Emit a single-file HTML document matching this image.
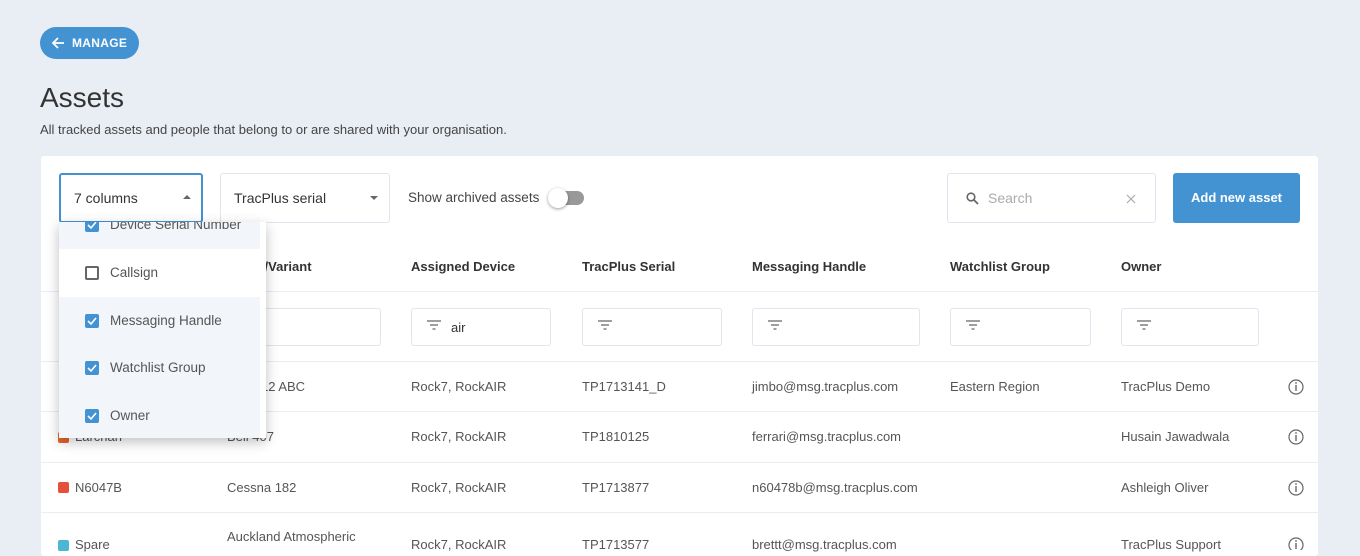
<!DOCTYPE html><html><head><style>
*{box-sizing:border-box;margin:0;padding:0}
body{width:1360px;height:550px;overflow:hidden;background:#e9eef5;font-family:"Liberation Sans",sans-serif;color:#333;position:relative}
.abs{position:absolute}
.btn{left:40px;top:27px;width:99px;height:32px;border-radius:16px;background:#4393d3;color:#fff;font-size:12px;font-weight:bold;line-height:32px;padding-left:32px;letter-spacing:.3px}
h1{position:absolute;left:40px;top:82px;font-size:28px;font-weight:normal;color:#333}
.sub{left:40px;top:122px;font-size:13px;color:#444}
.card{left:41px;top:156px;width:1277px;height:400px;background:#fff;border-radius:3px}
.sel{border:1px solid #dfe6ee;border-radius:3px;height:50px;font-size:14px;line-height:48px;padding-left:13px;background:#fff}
.th{font-size:13px;font-weight:bold;color:#333;top:259px}
.f{top:308px;height:38px;border:1px solid #dfe6ee;border-radius:3px;background:#fff}
.td{font-size:13px;color:#555}
.hl{height:1px;background:#e8eef4;left:41px;width:1277px}
.dot{width:11px;height:11px;border-radius:2px}
.menu{left:59px;top:222px;width:207px;height:216px;background:#fff;box-shadow:0 4px 12px rgba(0,0,0,.25);overflow:hidden}
.it{position:absolute;left:0;width:201px;height:48px;font-size:13.5px;color:#555;line-height:48px;padding-left:51px}
.cb{position:absolute;left:26px;top:17px;width:14px;height:14px;border-radius:2px;background:#4393d3}
.cb.off{background:#fff;border:2px solid #666}
</style></head><body>
<div class="abs btn"><svg class="abs" style="left:11px;top:9px" width="14" height="14" viewBox="0 0 14 14"><path d="M13 7H2M7 2L2 7l5 5" stroke="#fff" stroke-width="1.8" fill="none"/></svg>MANAGE</div>
<h1>Assets</h1>
<div class="abs sub">All tracked assets and people that belong to or are shared with your organisation.</div>
<div class="abs card"></div>
<div class="abs sel" style="left:59px;top:173px;width:144px;border:2px solid #4393d3;line-height:46px">7 columns<span class="abs" style="left:122px;top:20px;border:4px solid transparent;border-bottom:4px solid #666;border-top:0"></span></div>
<div class="abs sel" style="left:220px;top:173px;width:170px">TracPlus serial<span class="abs" style="left:149px;top:22px;border:4px solid transparent;border-top:4px solid #666;border-bottom:0"></span></div>
<div class="abs" style="left:408px;top:190px;font-size:13.5px;color:#444">Show archived assets</div>
<div class="abs" style="left:552px;top:191px;width:32px;height:14px;border-radius:7px;background:#999"></div>
<div class="abs" style="left:548px;top:188px;width:20px;height:20px;border-radius:50%;background:#fff;box-shadow:0 1px 3px rgba(0,0,0,.4)"></div>
<div class="abs sel" style="left:947px;top:173px;width:209px;color:#aaa;padding-left:40px">Search
<svg class="abs" style="left:18px;top:18px" width="13" height="13" viewBox="0 0 13 13"><circle cx="5" cy="5" r="3.8" stroke="#666" stroke-width="1.6" fill="none"/><path d="M8 8l4 4" stroke="#666" stroke-width="1.8"/></svg>
<svg class="abs" style="left:178px;top:20px" width="10" height="10"><path d="M1 1l8 8M9 1L1 9" stroke="#aaa" stroke-width="1.2"/></svg></div>
<div class="abs" style="left:1173px;top:173px;width:127px;height:50px;background:#4393d3;border-radius:3px;color:#fff;font-size:13px;font-weight:bold;text-align:center;line-height:50px">Add new asset</div>

<div class="abs th" style="left:227px">Model/Variant</div>
<div class="abs th" style="left:411px">Assigned Device</div>
<div class="abs th" style="left:582px">TracPlus Serial</div>
<div class="abs th" style="left:752px">Messaging Handle</div>
<div class="abs th" style="left:950px">Watchlist Group</div>
<div class="abs th" style="left:1121px">Owner</div>
<div class="abs hl" style="top:291px"></div>
<div class="abs f" style="left:227px;width:154px"></div>
<div class="abs f" style="left:411px;width:140px"><span class="abs td" style="left:39px;top:11px;color:#333">air</span></div>
<div class="abs f" style="left:582px;width:140px"></div>
<div class="abs f" style="left:752px;width:168px"></div>
<div class="abs f" style="left:950px;width:141px"></div>
<div class="abs f" style="left:1121px;width:138px"></div>
<svg class="abs" style="left:0;top:0" width="1360" height="550">
<g stroke="#666" stroke-width="1.3"><g id="fi"><path d="M427 321h14M430 325h8M432.5 329h3"/></g>
<use href="#fi" x="171"/><use href="#fi" x="341"/><use href="#fi" x="539"/><use href="#fi" x="710"/></g>
<g fill="none" stroke="#666" stroke-width="1.2"><circle cx="1296" cy="387" r="7"/><circle cx="1296" cy="437" r="7"/><circle cx="1296" cy="488" r="7"/><circle cx="1296" cy="545" r="7"/></g>
<g stroke="#666" stroke-width="1.4"><path d="M1296 385v6M1296 435v6M1296 486v6M1296 543v6"/></g>
<g fill="#666"><circle cx="1296" cy="383" r=".9"/><circle cx="1296" cy="433" r=".9"/><circle cx="1296" cy="484" r=".9"/><circle cx="1296" cy="541" r=".9"/></g>
</svg>
<div class="abs hl" style="top:361px"></div>
<div class="abs hl" style="top:411px"></div>
<div class="abs hl" style="top:462px"></div>
<div class="abs hl" style="top:512px"></div>
<div class="abs td" style="left:227px;top:379px">Dash 12 ABC</div><div class="abs td" style="left:411px;top:379px">Rock7, RockAIR</div><div class="abs td" style="left:582px;top:379px">TP1713141_D</div><div class="abs td" style="left:752px;top:379px">jimbo@msg.tracplus.com</div><div class="abs td" style="left:950px;top:379px">Eastern Region</div><div class="abs td" style="left:1121px;top:379px">TracPlus Demo</div>
<div class="abs dot" style="left:58px;top:432px;background:#e5642b"></div><div class="abs td" style="left:75px;top:429px">Larchan</div><div class="abs td" style="left:227px;top:429px">Bell 407</div><div class="abs td" style="left:411px;top:429px">Rock7, RockAIR</div><div class="abs td" style="left:582px;top:429px">TP1810125</div><div class="abs td" style="left:752px;top:429px">ferrari@msg.tracplus.com</div><div class="abs td" style="left:1121px;top:429px">Husain Jawadwala</div>
<div class="abs dot" style="left:58px;top:482px;background:#e4503a"></div><div class="abs td" style="left:75px;top:480px">N6047B</div><div class="abs td" style="left:227px;top:480px">Cessna 182</div><div class="abs td" style="left:411px;top:480px">Rock7, RockAIR</div><div class="abs td" style="left:582px;top:480px">TP1713877</div><div class="abs td" style="left:752px;top:480px">n60478b@msg.tracplus.com</div><div class="abs td" style="left:1121px;top:480px">Ashleigh Oliver</div>
<div class="abs dot" style="left:58px;top:540px;background:#4bb7d4"></div><div class="abs td" style="left:75px;top:537px">Spare</div><div class="abs td" style="left:227px;top:529px">Auckland Atmospheric</div><div class="abs td" style="left:411px;top:537px">Rock7, RockAIR</div><div class="abs td" style="left:582px;top:537px">TP1713577</div><div class="abs td" style="left:752px;top:537px">brettt@msg.tracplus.com</div><div class="abs td" style="left:1121px;top:537px">TracPlus Support</div>

<div class="abs menu">
<div class="it" style="top:-21px;background:#f2f6fa"><div class="cb"></div>Device Serial Number</div>
<div class="it" style="top:27px"><div class="cb off"></div>Callsign</div>
<div class="it" style="top:75px;background:#f2f6fa"><div class="cb"></div>Messaging Handle</div>
<div class="it" style="top:122px;background:#f2f6fa"><div class="cb"></div>Watchlist Group</div>
<div class="it" style="top:170px;background:#f2f6fa"><div class="cb"></div>Owner</div>
</div>
<svg class="abs" style="left:59px;top:222px" width="207" height="216"><g stroke="#fff" stroke-width="1.6" fill="none"><path d="M29 3l3 3 5-6"/><path d="M29 99l3 3 5-6M29 146l3 3 5-6M29 194l3 3 5-6"/></g></svg>
</body></html>
